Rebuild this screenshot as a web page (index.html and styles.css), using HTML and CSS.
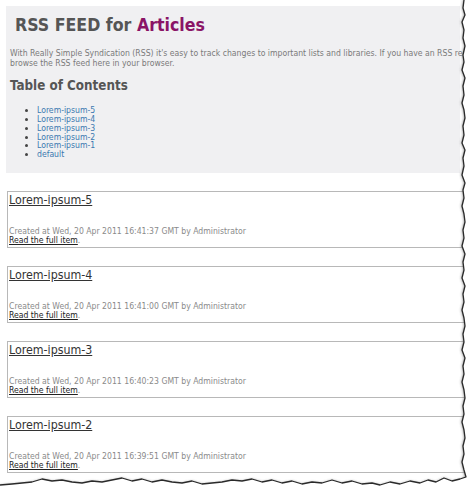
FILE: index.html
```
<!DOCTYPE html>
<html>
<head>
<meta charset="utf-8">
<title>RSS FEED for Articles</title>
<link rel="stylesheet" href="styles.css">
</head>
<body>
<div class="page">
  <div class="intro">
    <h1 class="feed-title">RSS FEED for <span class="list-name">Articles</span></h1>
    <p class="desc">With Really Simple Syndication (RSS) it's easy to track changes to important lists and libraries. If you have an RSS reader, you can subscribe<br>browse the RSS feed here in your browser.</p>
    <h2 class="toc-title">Table of Contents</h2>
    <ul class="toc">
      <li><a href="#i5">Lorem-ipsum-5</a></li>
      <li><a href="#i4">Lorem-ipsum-4</a></li>
      <li><a href="#i3">Lorem-ipsum-3</a></li>
      <li><a href="#i2">Lorem-ipsum-2</a></li>
      <li><a href="#i1">Lorem-ipsum-1</a></li>
      <li><a href="#d">default</a></li>
    </ul>
  </div>
  <div class="items">
    <div class="item" id="i5">
      <a class="item-title" href="#i5">Lorem-ipsum-5</a>
      <div class="meta">Created at Wed, 20 Apr 2011 16:41:37 GMT by Administrator</div>
      <div class="more"><a href="#i5">Read the full item</a>.</div>
    </div>
    <div class="item" id="i4">
      <a class="item-title" href="#i4">Lorem-ipsum-4</a>
      <div class="meta">Created at Wed, 20 Apr 2011 16:41:00 GMT by Administrator</div>
      <div class="more"><a href="#i4">Read the full item</a>.</div>
    </div>
    <div class="item" id="i3">
      <a class="item-title" href="#i3">Lorem-ipsum-3</a>
      <div class="meta">Created at Wed, 20 Apr 2011 16:40:23 GMT by Administrator</div>
      <div class="more"><a href="#i3">Read the full item</a>.</div>
    </div>
    <div class="item" id="i2">
      <a class="item-title" href="#i2">Lorem-ipsum-2</a>
      <div class="meta">Created at Wed, 20 Apr 2011 16:39:51 GMT by Administrator</div>
      <div class="more"><a href="#i2">Read the full item</a>.</div>
    </div>
  </div>
  <svg class="torn" width="474" height="494" viewBox="0 0 474 494" aria-hidden="true">
    <defs>
      <filter id="sh" x="-10%" y="-10%" width="120%" height="120%">
        <feGaussianBlur stdDeviation="1.6"/>
      </filter>
    </defs>
    <path class="torn-shadow" filter="url(#sh)" d="M465 0 L464 8 L466 15 L463 22 L465 30 L464 38 L466 46 L464 55 L465 62 L463 70 L466 78 L464 86 L465 95 L463 103 L465 110 L466 118 L464 126 L465 135 L463 143 L466 150 L464 158 L465 166 L463 175 L466 183 L464 190 L465 198 L463 206 L465 214 L466 222 L464 230 L465 238 L463 246 L466 254 L464 262 L465 270 L463 278 L466 286 L464 294 L465 302 L463 310 L465 318 L466 326 L464 334 L465 342 L463 350 L466 358 L464 366 L465 374 L463 382 L465 390 L466 398 L464 406 L465 414 L463 422 L465 430 L466 438 L464 446 L465 454 L463 462 L465 470 L467 478 L461 481 L452 483 L444 480 L436 484 L428 482 L420 485 L410 483 L400 486 L390 484 L380 487 L372 485 L362 486 L352 483 L342 485 L332 482 L322 485 L312 484 L302 486 L292 483 L282 485 L272 482 L262 484 L252 481 L242 483 L232 482 L222 484 L212 485 L202 486 L192 483 L182 485 L172 484 L162 482 L152 484 L142 481 L132 483 L122 480 L112 482 L102 484 L92 483 L82 485 L72 484 L62 482 L52 483 L42 481 L32 484 L22 485 L12 486 L0 487"/>
    <path class="torn-mask" d="M474 0 L464 0 L463 8 L465 15 L462 22 L464 30 L463 38 L465 46 L463 55 L464 62 L462 70 L465 78 L463 86 L464 95 L462 103 L464 110 L465 118 L463 126 L464 135 L462 143 L465 150 L463 158 L464 166 L462 175 L465 183 L463 190 L464 198 L462 206 L464 214 L465 222 L463 230 L464 238 L462 246 L465 254 L463 262 L464 270 L462 278 L465 286 L463 294 L464 302 L462 310 L464 318 L465 326 L463 334 L464 342 L462 350 L465 358 L463 366 L464 374 L462 382 L464 390 L465 398 L463 406 L464 414 L462 422 L464 430 L465 438 L463 446 L464 454 L462 462 L464 470 L466 477 L460 479 L452 481 L444 478 L436 482 L428 480 L420 483 L410 481 L400 484 L390 482 L380 485 L372 483 L362 484 L352 481 L342 483 L332 480 L322 483 L312 482 L302 484 L292 481 L282 483 L272 480 L262 482 L252 479 L242 481 L232 480 L222 482 L212 483 L202 484 L192 481 L182 483 L172 482 L162 480 L152 482 L142 479 L132 481 L122 478 L112 480 L102 482 L92 481 L82 483 L72 482 L62 480 L52 481 L42 479 L32 482 L22 483 L12 484 L0 485 L0 494 L474 494 Z"/>
    <path class="torn-edge" d="M464 0 L463 8 L465 15 L462 22 L464 30 L463 38 L465 46 L463 55 L464 62 L462 70 L465 78 L463 86 L464 95 L462 103 L464 110 L465 118 L463 126 L464 135 L462 143 L465 150 L463 158 L464 166 L462 175 L465 183 L463 190 L464 198 L462 206 L464 214 L465 222 L463 230 L464 238 L462 246 L465 254 L463 262 L464 270 L462 278 L465 286 L463 294 L464 302 L462 310 L464 318 L465 326 L463 334 L464 342 L462 350 L465 358 L463 366 L464 374 L462 382 L464 390 L465 398 L463 406 L464 414 L462 422 L464 430 L465 438 L463 446 L464 454 L462 462 L464 470 L466 477 L460 479 L452 481 L444 478 L436 482 L428 480 L420 483 L410 481 L400 484 L390 482 L380 485 L372 483 L362 484 L352 481 L342 483 L332 480 L322 483 L312 482 L302 484 L292 481 L282 483 L272 480 L262 482 L252 479 L242 481 L232 480 L222 482 L212 483 L202 484 L192 481 L182 483 L172 482 L162 480 L152 482 L142 479 L132 481 L122 478 L112 480 L102 482 L92 481 L82 483 L72 482 L62 480 L52 481 L42 479 L32 482 L22 483 L12 484 L0 485"/>
  </svg>
</div>
</body>
</html>
```
FILE: styles.css
```
html, body {
  margin: 0;
  padding: 0;
  background: #ffffff;
}

.page {
  position: relative;
  width: 474px;
  height: 494px;
  overflow: hidden;
  font-family: "DejaVu Sans Condensed", "DejaVu Sans", sans-serif;
  font-stretch: condensed;
  color: #333;
}

.intro {
  margin: 6px 0 0 6px;
  width: 454px;
  padding: 8px 0 14px 4px;
  box-sizing: border-box;
  background: #f0f0f2;
}

.feed-title {
  margin: 0 0 12px 5px;
  font-size: 17.6px;
  line-height: 22px;
  font-weight: bold;
  color: #555555;
}

.list-name {
  color: #8a1466;
}

.desc {
  margin: 0;
  font-size: 8.6px;
  line-height: 10px;
  color: #7a7a7a;
  white-space: nowrap;
}

.toc-title {
  margin: 10px 0 12px 0;
  font-size: 13.3px;
  line-height: 16px;
  font-weight: bold;
  color: #555555;
}

.toc {
  margin: 0;
  padding-left: 27px;
  font-size: 8.6px;
  line-height: 8.85px;
  color: #444;
}

.toc a {
  color: #3b78b0;
  text-decoration: none;
}

.items {
  display: flex;
  flex-direction: column;
  gap: 18px;
  margin: 18px 0 0 7px;
}

.item {
  width: 500px;
  height: 57px;
  box-sizing: border-box;
  border: 1px solid #b8b8b8;
  padding: 1px 0 3px 1px;
  display: flex;
  flex-direction: column;
  background: #fff;
}

.item-title {
  font-size: 12.3px;
  line-height: 14px;
  color: #333;
  text-decoration: underline;
  align-self: flex-start;
}

.meta {
  margin-top: 20px;
  font-size: 8.6px;
  line-height: 9px;
  color: #8a8a8a;
}

.more {
  font-size: 8.6px;
  line-height: 9px;
  color: #888;
}

.more a {
  color: #222;
  text-decoration: underline;
}

.torn {
  position: absolute;
  left: 0;
  top: 0;
}

.torn-mask {
  fill: #ffffff;
}

.torn-shadow {
  fill: none;
  stroke: #555;
  stroke-width: 3px;
  opacity: 0.8;
}

.torn-edge {
  fill: none;
  stroke: #2a2a2a;
  stroke-width: 1.3px;
  stroke-linejoin: round;
}
```
